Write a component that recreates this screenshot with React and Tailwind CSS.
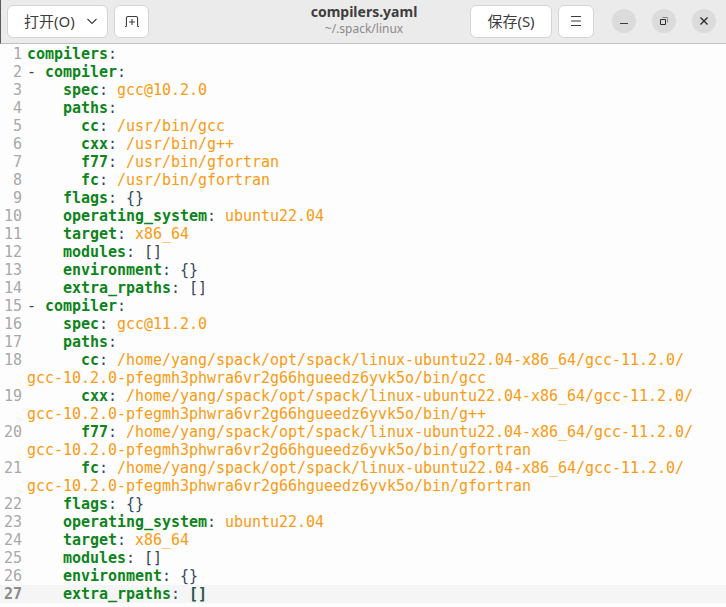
import React from 'react';

const k = (t) => ({ t, c: 'key' });
const v = (t) => ({ t, c: 'val' });
const b = (t) => ({ t, c: 'brk' });

// helpers for the repeated "key: value" shape
const kv = (indent, key, val) => [{ t: indent }, k(key), { t: ': ' }, v(val)];
const kb = (indent, key, val) => [{ t: indent }, k(key), { t: ': ' }, b(val)];
const ko = (indent, key) => [{ t: indent }, k(key), { t: ':' }];

const PREFIX = '/home/yang/spack/opt/spack/linux-ubuntu22.04-x86_64/gcc-11.2.0/';
const HASH = 'gcc-10.2.0-pfegmh3phwra6vr2g66hgueedz6yvk5o/bin/';

const rows = [
  { s: ko('', 'compilers') },
  { s: [{ t: '- ' }, k('compiler'), { t: ':' }] },
  { s: kv('    ', 'spec', 'gcc@10.2.0') },
  { s: ko('    ', 'paths') },
  { s: kv('      ', 'cc', '/usr/bin/gcc') },
  { s: kv('      ', 'cxx', '/usr/bin/g++') },
  { s: kv('      ', 'f77', '/usr/bin/gfortran') },
  { s: kv('      ', 'fc', '/usr/bin/gfortran') },
  { s: kb('    ', 'flags', '{}') },
  { s: kv('    ', 'operating_system', 'ubuntu22.04') },
  { s: kv('    ', 'target', 'x86_64') },
  { s: kb('    ', 'modules', '[]') },
  { s: kb('    ', 'environment', '{}') },
  { s: kb('    ', 'extra_rpaths', '[]') },
  { s: [{ t: '- ' }, k('compiler'), { t: ':' }] },
  { s: kv('    ', 'spec', 'gcc@11.2.0') },
  { s: ko('    ', 'paths') },
  { s: kv('      ', 'cc', PREFIX), w: HASH + 'gcc' },
  { s: kv('      ', 'cxx', PREFIX), w: HASH + 'g++' },
  { s: kv('      ', 'f77', PREFIX), w: HASH + 'gfortran' },
  { s: kv('      ', 'fc', PREFIX), w: HASH + 'gfortran' },
  { s: kb('    ', 'flags', '{}') },
  { s: kv('    ', 'operating_system', 'ubuntu22.04') },
  { s: kv('    ', 'target', 'x86_64') },
  { s: kb('    ', 'modules', '[]') },
  { s: kb('    ', 'environment', '{}') },
  { s: kb('    ', 'extra_rpaths', '[]'), current: true },
];

function Seg({ seg, current }) {
  if (seg.c === 'key') return <span className="font-bold text-[#0e8420]">{seg.t}</span>;
  if (seg.c === 'val') return <span className="text-[#f99b11]">{seg.t}</span>;
  // the bracket pair next to the cursor gets matched
  if (seg.c === 'brk' && current) return <span className="font-bold text-[#26584a]">{seg.t}</span>;
  return <span>{seg.t}</span>;
}

function Row({ row, n }) {
  return (
    <div className={`flex ${row.current ? 'bg-[#f5f5f5]' : ''}`}>
      <div className={`w-[22px] shrink-0 text-right ${row.current ? 'font-bold text-[#8a8a8a]' : 'text-[#a8a8a8]'}`}>{n}</div>
      <div className="ml-[5px] whitespace-pre text-[#36465c]">
        <div>{row.s.map((seg, i) => <Seg key={i} seg={seg} current={row.current} />)}</div>
        {row.w && <div className="text-[#f99b11]">{row.w}</div>}
      </div>
    </div>
  );
}

function HeaderButton({ className, children }) {
  return (
    <button className={`h-[33px] flex items-center justify-center rounded-[6px] bg-white border border-[#d4d4d4] text-[#3d3d3d] text-[15px] ${className}`}>
      {children}
    </button>
  );
}

export default function App() {
  return (
    <div className="w-[726px] h-[607px] overflow-hidden bg-[#fdfdfd] flex flex-col font-['Noto_Sans','Noto_Sans_CJK_SC',sans-serif]">
      <header className="h-[44px] shrink-0 grid grid-cols-[1fr_auto_1fr] items-center bg-[#ebebeb] border-b border-[#c0c0c0] border-l border-l-[#5a5a5a] pl-[6px] pr-[10px] pb-[3px] pt-[2px]">
        <div className="flex items-center">
          <HeaderButton className="w-[101px] !justify-start gap-[12px] pl-[16px]">
            <span>打开(O)</span>
            <svg width="10" height="10" viewBox="0 0 10 10" fill="none" stroke="#3d3d3d" strokeWidth="1.1"><path d="M0.500 3l4.500 4.500 4.500-4.500" /></svg>
          </HeaderButton>
          <HeaderButton className="w-[35px] ml-[6px]">
            <svg width="16" height="13" viewBox="0 0 16 13" fill="none" stroke="#3d3d3d" strokeWidth="1.1">
              <path d="M1 11.500h.6c.5 0 .8-.3.8-.8V3c0-1 .5-1.500 1.500-1.500h8.200c1 0 1.500.5 1.500 1.500v7.700c0 .5.300.8.800.8h.6" />
              <path d="M8 4v6M5 7h6" />
            </svg>
          </HeaderButton>
        </div>
        <div className="flex flex-col items-center pl-[5px] pb-[3px]">
          <div className="text-[14px] font-bold text-[#3d3d3d] leading-[17px]">compilers.yaml</div>
          <div className="text-[12px] text-[#8a8a8a] leading-[15px] mt-[1px]">~/.spack/linux</div>
        </div>
        <div className="flex items-center justify-end">
          <HeaderButton className="w-[82px]">保存(S)</HeaderButton>
          <HeaderButton className="w-[36px] ml-[6px]">
            <svg width="12" height="12" viewBox="0 0 12 12" stroke="#3d3d3d" strokeWidth="1"><path d="M1 1.500h10M1 6h10M1 10.500h10" /></svg>
          </HeaderButton>
          <div className="ml-[18px] flex gap-[16px]">
            <div className="w-[24px] h-[24px] rounded-full bg-[#dbdbdb] flex items-center justify-center">
              <svg width="10" height="10" viewBox="0 0 10 10" stroke="#3d3d3d" strokeWidth="1"><path d="M1 7.500h8" /></svg>
            </div>
            <div className="w-[24px] h-[24px] rounded-full bg-[#dbdbdb] flex items-center justify-center">
              <svg width="10" height="10" viewBox="0 0 10 10" fill="none" strokeWidth="1">
                <path d="M1.500 3.500h5v5h-5z" stroke="#2d2d2d" />
                <path d="M3.500 1.500h5v5" stroke="#8a8a8a" />
              </svg>
            </div>
            <div className="w-[24px] h-[24px] rounded-full bg-[#dbdbdb] flex items-center justify-center">
              <svg width="10" height="10" viewBox="0 0 10 10" stroke="#2d2d2d" strokeWidth="1.400"><path d="M1.500 1.500l7 7M8.500 1.500l-7 7" /></svg>
            </div>
          </div>
        </div>
      </header>
      <main className="pt-[1px] font-['DejaVu_Sans_Mono',monospace] text-[15px] leading-[18px] tracking-[-0.03px]">
        {rows.map((row, i) => <Row key={i} row={row} n={i + 1} />)}
      </main>
    </div>
  );
}
